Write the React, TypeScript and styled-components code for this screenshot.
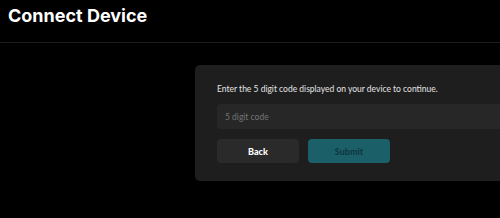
import styled, { createGlobalStyle } from 'styled-components';
import { useState } from 'react';

const GlobalStyle = createGlobalStyle`
  body {
    margin: 0;
    background: #000;
    font-family: Lato, 'Noto Sans', sans-serif;
    overflow: hidden;
  }
`;

const Page = styled.div`
  width: 500px;
  height: 218px;
  background: #000;
  overflow: hidden;
`;

const Header = styled.header`
  height: 43px;
  padding: 0 8px;
  display: flex;
  align-items: flex-start;
  border-bottom: 1px solid #1c1c1c;
  box-sizing: border-box;
`;

const Title = styled.h1`
  margin: 5px 0 0;
  color: #fff;
  font-family: Inter, 'Noto Sans', sans-serif;
  font-size: 18px;
  font-weight: 700;
`;

const Body = styled.main`
  padding: 22px 0 0 195px;
`;

const Card = styled.section`
  width: 420px;
  height: 116px;
  box-sizing: border-box;
  background: #1e1e1e;
  border-radius: 5px;
  padding: 17px 22px 0;
  display: flex;
  flex-direction: column;
`;

const Hint = styled.p`
  margin: 0;
  color: #e4e4e4;
  font-size: 8.5px;
  line-height: 14px;
`;

const CodeInput = styled.input`
  margin-top: 8px;
  height: 25px;
  border: 0;
  border-radius: 4px;
  background: #272727;
  color: #ddd;
  padding: 0 8px;
  font-family: inherit;
  font-size: 8.5px;
  outline: none;
  ::placeholder {
    color: #8a8a8a;
  }
`;

const Actions = styled.div`
  margin-top: 10px;
  display: flex;
  gap: 9px;
`;

const Button = styled.button<{ $primary?: boolean }>`
  width: 82px;
  height: 24px;
  border: 0;
  border-radius: 4px;
  font-family: inherit;
  font-size: 9px;
  font-weight: 900;
  cursor: pointer;
  background: ${(p) => (p.$primary ? '#1b6069' : '#2a2a2a')};
  color: ${(p) => (p.$primary ? '#0e3a40' : '#fff')};
`;

const App = () => {
  const [code, setCode] = useState('');

  return (
    <Page>
      <GlobalStyle />
      <Header>
        <Title>Connect Device</Title>
      </Header>
      <Body>
        <Card>
          <Hint>Enter the 5 digit code displayed on your device to continue.</Hint>
          <CodeInput placeholder="5 digit code" value={code} onChange={(e) => setCode(e.target.value)} />
          <Actions>
            <Button>Back</Button>
            <Button $primary>Submit</Button>
          </Actions>
        </Card>
      </Body>
    </Page>
  );
};

export default App;
